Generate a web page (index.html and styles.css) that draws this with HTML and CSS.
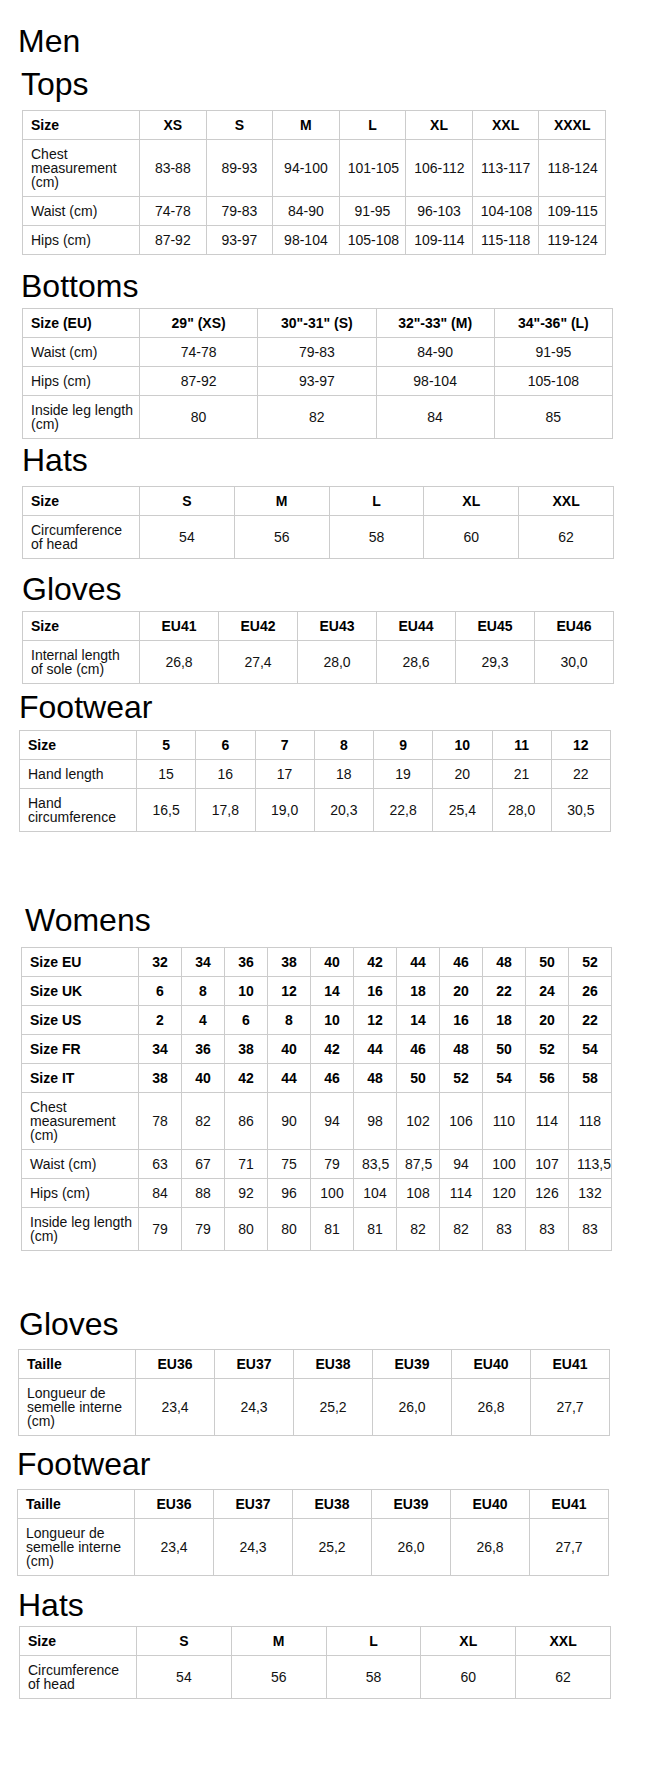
FILE: index.html
```html
<!DOCTYPE html>
<html lang="en">
<head>
<meta charset="utf-8">
<title>Size guide</title>
<link rel="stylesheet" href="styles.css">
</head>
<body>
<main class="sheet">
  <h1 class="title title-men">Men</h1>

  <section class="block b-tops">
    <h2 class="title">Tops</h2>
    <table class="grid">
      <colgroup><col class="col-lbl"><col><col><col><col><col><col><col></colgroup>
      <tr><th class="lbl">Size</th><th>XS</th><th>S</th><th>M</th><th>L</th><th>XL</th><th>XXL</th><th>XXXL</th></tr>
      <tr><td class="lbl">Chest measurement (cm)</td><td>83-88</td><td>89-93</td><td>94-100</td><td>101-105</td><td>106-112</td><td>113-117</td><td>118-124</td></tr>
      <tr><td class="lbl">Waist (cm)</td><td>74-78</td><td>79-83</td><td>84-90</td><td>91-95</td><td>96-103</td><td>104-108</td><td>109-115</td></tr>
      <tr><td class="lbl">Hips (cm)</td><td>87-92</td><td>93-97</td><td>98-104</td><td>105-108</td><td>109-114</td><td>115-118</td><td>119-124</td></tr>
    </table>
  </section>

  <section class="block b-bottoms">
    <h2 class="title">Bottoms</h2>
    <table class="grid">
      <colgroup><col class="col-lbl"><col><col><col><col></colgroup>
      <tr><th class="lbl">Size (EU)</th><th>29" (XS)</th><th>30"-31" (S)</th><th>32"-33" (M)</th><th>34"-36" (L)</th></tr>
      <tr><td class="lbl">Waist (cm)</td><td>74-78</td><td>79-83</td><td>84-90</td><td>91-95</td></tr>
      <tr><td class="lbl">Hips (cm)</td><td>87-92</td><td>93-97</td><td>98-104</td><td>105-108</td></tr>
      <tr><td class="lbl">Inside leg length (cm)</td><td>80</td><td>82</td><td>84</td><td>85</td></tr>
    </table>
  </section>

  <section class="block b-hats">
    <h2 class="title">Hats</h2>
    <table class="grid">
      <colgroup><col class="col-lbl"><col><col><col><col><col></colgroup>
      <tr><th class="lbl">Size</th><th>S</th><th>M</th><th>L</th><th>XL</th><th>XXL</th></tr>
      <tr><td class="lbl">Circumference of head</td><td>54</td><td>56</td><td>58</td><td>60</td><td>62</td></tr>
    </table>
  </section>

  <section class="block b-gloves">
    <h2 class="title">Gloves</h2>
    <table class="grid">
      <colgroup><col class="col-lbl"><col><col><col><col><col><col></colgroup>
      <tr><th class="lbl">Size</th><th>EU41</th><th>EU42</th><th>EU43</th><th>EU44</th><th>EU45</th><th>EU46</th></tr>
      <tr><td class="lbl">Internal length of sole (cm)</td><td>26,8</td><td>27,4</td><td>28,0</td><td>28,6</td><td>29,3</td><td>30,0</td></tr>
    </table>
  </section>

  <section class="block b-footwear">
    <h2 class="title">Footwear</h2>
    <table class="grid">
      <colgroup><col class="col-lbl"><col><col><col><col><col><col><col><col></colgroup>
      <tr><th class="lbl">Size</th><th>5</th><th>6</th><th>7</th><th>8</th><th>9</th><th>10</th><th>11</th><th>12</th></tr>
      <tr><td class="lbl">Hand length</td><td>15</td><td>16</td><td>17</td><td>18</td><td>19</td><td>20</td><td>21</td><td>22</td></tr>
      <tr><td class="lbl">Hand circumference</td><td>16,5</td><td>17,8</td><td>19,0</td><td>20,3</td><td>22,8</td><td>25,4</td><td>28,0</td><td>30,5</td></tr>
    </table>
  </section>

  <section class="block b-womens">
    <h1 class="title">Womens</h1>
    <table class="grid">
      <colgroup><col class="col-lbl"><col><col><col><col><col><col><col><col><col><col><col></colgroup>
      <tr><th class="lbl">Size EU</th><th>32</th><th>34</th><th>36</th><th>38</th><th>40</th><th>42</th><th>44</th><th>46</th><th>48</th><th>50</th><th>52</th></tr>
      <tr><th class="lbl">Size UK</th><th>6</th><th>8</th><th>10</th><th>12</th><th>14</th><th>16</th><th>18</th><th>20</th><th>22</th><th>24</th><th>26</th></tr>
      <tr><th class="lbl">Size US</th><th>2</th><th>4</th><th>6</th><th>8</th><th>10</th><th>12</th><th>14</th><th>16</th><th>18</th><th>20</th><th>22</th></tr>
      <tr><th class="lbl">Size FR</th><th>34</th><th>36</th><th>38</th><th>40</th><th>42</th><th>44</th><th>46</th><th>48</th><th>50</th><th>52</th><th>54</th></tr>
      <tr><th class="lbl">Size IT</th><th>38</th><th>40</th><th>42</th><th>44</th><th>46</th><th>48</th><th>50</th><th>52</th><th>54</th><th>56</th><th>58</th></tr>
      <tr><td class="lbl">Chest measurement (cm)</td><td>78</td><td>82</td><td>86</td><td>90</td><td>94</td><td>98</td><td>102</td><td>106</td><td>110</td><td>114</td><td>118</td></tr>
      <tr><td class="lbl">Waist (cm)</td><td>63</td><td>67</td><td>71</td><td>75</td><td>79</td><td>83,5</td><td>87,5</td><td>94</td><td>100</td><td>107</td><td>113,5</td></tr>
      <tr><td class="lbl">Hips (cm)</td><td>84</td><td>88</td><td>92</td><td>96</td><td>100</td><td>104</td><td>108</td><td>114</td><td>120</td><td>126</td><td>132</td></tr>
      <tr><td class="lbl">Inside leg length (cm)</td><td>79</td><td>79</td><td>80</td><td>80</td><td>81</td><td>81</td><td>82</td><td>82</td><td>83</td><td>83</td><td>83</td></tr>
    </table>
  </section>

  <section class="block b-wgloves">
    <h2 class="title">Gloves</h2>
    <table class="grid">
      <colgroup><col class="col-lbl"><col><col><col><col><col><col></colgroup>
      <tr><th class="lbl">Taille</th><th>EU36</th><th>EU37</th><th>EU38</th><th>EU39</th><th>EU40</th><th>EU41</th></tr>
      <tr><td class="lbl">Longueur de semelle interne (cm)</td><td>23,4</td><td>24,3</td><td>25,2</td><td>26,0</td><td>26,8</td><td>27,7</td></tr>
    </table>
  </section>

  <section class="block b-wfootwear">
    <h2 class="title">Footwear</h2>
    <table class="grid">
      <colgroup><col class="col-lbl"><col><col><col><col><col><col></colgroup>
      <tr><th class="lbl">Taille</th><th>EU36</th><th>EU37</th><th>EU38</th><th>EU39</th><th>EU40</th><th>EU41</th></tr>
      <tr><td class="lbl">Longueur de semelle interne (cm)</td><td>23,4</td><td>24,3</td><td>25,2</td><td>26,0</td><td>26,8</td><td>27,7</td></tr>
    </table>
  </section>

  <section class="block b-whats">
    <h2 class="title">Hats</h2>
    <table class="grid">
      <colgroup><col class="col-lbl"><col><col><col><col><col></colgroup>
      <tr><th class="lbl">Size</th><th>S</th><th>M</th><th>L</th><th>XL</th><th>XXL</th></tr>
      <tr><td class="lbl">Circumference of head</td><td>54</td><td>56</td><td>58</td><td>60</td><td>62</td></tr>
    </table>
  </section>
</main>
</body>
</html>
```

FILE: styles.css
```css
* { box-sizing: border-box; }

html, body {
  margin: 0;
  padding: 0;
  background: #ffffff;
}

body {
  font-family: "Liberation Sans", Arial, sans-serif;
  color: #000000;
}

.sheet {
  padding-top: 24px;
  min-height: 1776px;
}

.title {
  margin: 0;
  font-size: 32px;
  line-height: 34px;
  font-weight: normal;
  color: #000000;
}

.title-men { margin-left: 18px; }

.grid {
  border-collapse: separate;
  border-spacing: 0;
  table-layout: fixed;
  border-top: 1px solid #cccccc;
  border-left: 1px solid #cccccc;
  font-size: 14px;
  line-height: 14px;
  color: #111111;
}

.grid th,
.grid td {
  border-right: 1px solid #cccccc;
  border-bottom: 1px solid #cccccc;
  padding: 7px 8px;
  text-align: center;
  vertical-align: middle;
  font-weight: normal;
  white-space: nowrap;
}

.grid th { font-weight: bold; color: #000000; }

.grid .lbl {
  text-align: left;
  padding-right: 5px;
  white-space: normal;
}

.col-lbl { width: 117px; }

/* section placement */
.b-tops { margin-top: 9px; }
.b-tops .title { margin-left: 21px; margin-bottom: 9px; }
.b-tops .grid { margin-left: 22px; width: 584px; }

.b-bottoms { margin-top: 14px; }
.b-bottoms .title { margin-left: 21px; margin-bottom: 5px; }
.b-bottoms .grid { margin-left: 22px; width: 591px; }

.b-hats { margin-top: 4px; }
.b-hats .title { margin-left: 22px; margin-bottom: 9px; }
.b-hats .grid { margin-left: 22px; width: 592px; }

.b-gloves { margin-top: 13px; }
.b-gloves .title { margin-left: 22px; margin-bottom: 5px; }
.b-gloves .grid { margin-left: 22px; width: 592px; }

.b-footwear { margin-top: 6px; }
.b-footwear .title { margin-left: 19px; margin-bottom: 6px; }
.b-footwear .grid { margin-left: 19px; width: 592px; }

.b-womens { margin-top: 71px; }
.b-womens .title { margin-left: 25px; margin-bottom: 10px; }
.b-womens .grid { margin-left: 21px; width: 591px; }

.b-wgloves { margin-top: 56px; }
.b-wgloves .title { margin-left: 19px; margin-bottom: 8px; }
.b-wgloves .grid { margin-left: 18px; width: 592px; }

.b-wfootwear { margin-top: 11px; }
.b-wfootwear .title { margin-left: 17px; margin-bottom: 8px; }
.b-wfootwear .grid { margin-left: 17px; width: 592px; }

.b-whats { margin-top: 12px; }
.b-whats .title { margin-left: 18px; margin-bottom: 4px; }
.b-whats .grid { margin-left: 19px; width: 592px; }
```
